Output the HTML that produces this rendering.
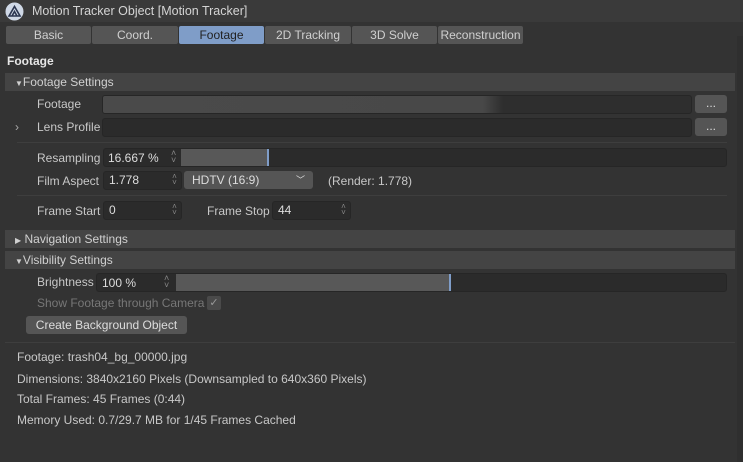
<!DOCTYPE html>
<html><head><style>
*{margin:0;padding:0;box-sizing:border-box}
body{width:743px;height:462px;background:#333;overflow:hidden;position:relative;font-family:"Liberation Sans",sans-serif;font-size:12px;color:#c8c8c8}
.a{position:absolute;white-space:nowrap}
.tab{position:absolute;top:26px;height:18px;background:#555;color:#d0d0d0;text-align:center;line-height:18px;border-radius:2px}
.hdr{position:absolute;left:5px;width:730px;height:18px;background:#444;line-height:18px;color:#d0d0d0}
.fld{position:absolute;background:#2b2b2b;border:1px solid #262626;border-radius:3px;height:19px;line-height:17px;padding-left:5px;color:#ddd}
.sp{position:absolute;right:3px;top:2px;width:7px;height:13px;color:#888;font-size:8px;line-height:6px;text-align:center}
.lbl{position:absolute;line-height:14px}
.sep{position:absolute;left:17px;width:710px;height:1px;background:#3e3e3e}
.btn{position:absolute;background:#555;border-radius:3px;color:#ddd;text-align:center}
</style></head><body>
<div class="a" style="left:0;top:0;width:743px;height:22px;background:#3a3a3a"></div>
<svg class="a" style="left:5px;top:2px" width="19" height="19" viewBox="0 0 19 19"><circle cx="9.5" cy="9.5" r="9" fill="#cfd8e6"/><path d="M4 14 L9.5 4.5 L15 14 Z M7 14 L9.5 9.5 L12 14" fill="none" stroke="#2a3550" stroke-width="1.6"/></svg>
<div class="a" style="left:32px;top:4px;font-size:12.5px;color:#d4d4d4">Motion Tracker Object [Motion Tracker]</div>
<div class="tab" style="left:6px;width:85px">Basic</div>
<div class="tab" style="left:92px;width:86px">Coord.</div>
<div class="tab" style="left:179px;width:85px;background:#7f9dc8;color:#222">Footage</div>
<div class="tab" style="left:265px;width:86px">2D Tracking</div>
<div class="tab" style="left:352px;width:85px">3D Solve</div>
<div class="tab" style="left:438px;width:85px">Reconstruction</div>
<div class="a" style="left:7px;top:54px;font-weight:bold;color:#e6e6e6">Footage</div>
<div class="hdr" style="top:73px"><span style="font-size:8px;margin-left:10px">▼</span>Footage Settings</div>
<div class="lbl" style="left:37px;top:97px">Footage</div>
<div class="fld" style="left:102px;top:95px;width:590px;background:linear-gradient(90deg,#4a4a4a 0,#484848 380px,#2e2e2e 400px)"></div>
<div class="btn" style="left:695px;top:95px;width:32px;height:18px;line-height:16px">...</div>
<div class="lbl" style="left:15px;top:120px;color:#aaa">›</div>
<div class="lbl" style="left:37px;top:120px">Lens Profile</div>
<div class="fld" style="left:102px;top:118px;width:590px"></div>
<div class="btn" style="left:695px;top:118px;width:32px;height:18px;line-height:16px">...</div>
<div class="sep" style="top:142px"></div>
<div class="lbl" style="left:37px;top:151px">Resampling</div>
<div class="fld" style="left:103px;top:148px;width:624px"></div>
<div class="a" style="left:181px;top:149px;width:87px;height:17px;background:#585858"></div>
<div class="a" style="left:267px;top:149px;width:2px;height:17px;background:#7f9dc8"></div>
<div class="a" style="left:108px;top:151px;color:#ddd">16.667 %</div>
<div class="a" style="left:171px;top:150px;color:#888;font-size:9px;line-height:7px">˄<br>˅</div>
<div class="lbl" style="left:37px;top:174px">Film Aspect</div>
<div class="fld" style="left:103px;top:171px;width:79px">1.778<span class="sp">˄<br>˅</span></div>
<div class="btn" style="left:184px;top:171px;width:129px;height:18px;line-height:18px;text-align:left;padding-left:8px">HDTV (16:9)<span style="position:absolute;right:8px;font-size:9px">﹀</span></div>
<div class="lbl" style="left:328px;top:174px">(Render: 1.778)</div>
<div class="sep" style="top:195px"></div>
<div class="lbl" style="left:37px;top:204px">Frame Start</div>
<div class="fld" style="left:103px;top:201px;width:79px">0<span class="sp">˄<br>˅</span></div>
<div class="lbl" style="left:207px;top:204px">Frame Stop</div>
<div class="fld" style="left:272px;top:201px;width:79px">44<span class="sp">˄<br>˅</span></div>
<div class="hdr" style="top:230px"><span style="font-size:8px;margin-left:10px">▶</span> Navigation Settings</div>
<div class="hdr" style="top:251px"><span style="font-size:8px;margin-left:10px">▼</span>Visibility Settings</div>
<div class="lbl" style="left:37px;top:275px">Brightness</div>
<div class="fld" style="left:96px;top:273px;width:631px"></div>
<div class="a" style="left:176px;top:274px;width:274px;height:17px;background:#585858"></div>
<div class="a" style="left:449px;top:274px;width:2px;height:17px;background:#7f9dc8"></div>
<div class="a" style="left:102px;top:276px;color:#ddd">100 %</div>
<div class="a" style="left:164px;top:275px;color:#888;font-size:9px;line-height:7px">˄<br>˅</div>
<div class="lbl" style="left:37px;top:296px;color:#777">Show Footage through Camera</div>
<div class="a" style="left:207px;top:296px;width:14px;height:14px;background:#4a4a4a;border-radius:2px;color:#999;font-size:11px;line-height:14px;text-align:center">✓</div>
<div class="btn" style="left:26px;top:316px;width:161px;height:18px;line-height:18px">Create Background Object</div>
<div class="sep" style="top:342px;left:5px;width:730px"></div>
<div class="lbl" style="left:17px;top:350px">Footage: trash04_bg_00000.jpg</div>
<div class="lbl" style="left:17px;top:372px">Dimensions: 3840x2160 Pixels (Downsampled to 640x360 Pixels)</div>
<div class="lbl" style="left:17px;top:392px">Total Frames: 45 Frames (0:44)</div>
<div class="lbl" style="left:17px;top:413px">Memory Used: 0.7/29.7 MB for 1/45 Frames Cached</div>
<div class="a" style="left:737px;top:36px;width:6px;height:426px;background:#2f2f2f"></div>
</body></html>
